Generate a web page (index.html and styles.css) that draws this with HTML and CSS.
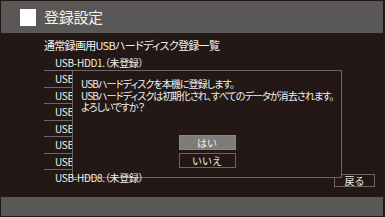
FILE: index.html
```html
<!DOCTYPE html>
<html lang="ja">
<head>
    <meta charset="UTF-8">
    <meta name="viewport" content="width=device-width, initial-scale=1.0">
    <title>登録設定</title>
    <link rel="stylesheet" href="styles.css">
</head>
<body>

    <div class="screen">
        <!-- ヘッダー -->
        <div class="header">
            <span class="header-icon"></span>
            <h1>登録設定</h1>
        </div>

        <!-- 登録一覧 -->
        <div class="content">
            <h2>通常録画用USBハードディスク登録一覧</h2>
            <div class="list-area">
                <ul class="hdd-list">
                    <li>USB-HDD1.（未登録）</li>
                    <li>USB-HDD2.（未登録）</li>
                    <li>USB-HDD3.（未登録）</li>
                    <li>USB-HDD4.（未登録）</li>
                    <li>USB-HDD5.（未登録）</li>
                    <li>USB-HDD6.（未登録）</li>
                    <li>USB-HDD7.（未登録）</li>
                    <li class="last">USB-HDD8.（未登録）</li>
                </ul>
                <button class="back-btn">戻る</button>
            </div>

            <!-- 確認ダイアログ -->
            <div class="dialog">
                <p>USBハードディスクを本機に登録します。<br>
                USBハードディスクは初期化され、すべてのデータが消去されます。<br>
                よろしいですか？</p>
                <div class="dialog-buttons">
                    <button class="selected">はい</button>
                    <button>いいえ</button>
                </div>
            </div>
        </div>

        <div class="footer"></div>
    </div>

</body>
</html>
```

FILE: styles.css
```css
/* リセット */
* {
    margin: 0;
    padding: 0;
    box-sizing: border-box;
}

body {
    font-family: "Noto Sans CJK JP", "Noto Sans", sans-serif;
    background-color: #231815;
    color: #f2f0ef;
    width: 385px;
    height: 217px;
    overflow: hidden;
}

.screen {
    width: 385px;
    height: 217px;
    padding: 1px 2px 1px 1px;
    display: flex;
    flex-direction: column;
}

/* ヘッダー */
.header {
    height: 32px;
    background-color: #595857;
    display: flex;
    align-items: center;
    padding-left: 19px;
}

.header-icon {
    width: 16px;
    height: 17px;
    background-color: #fff;
    margin-right: 8px;
}

.header h1 {
    font-size: 15px;
    font-weight: normal;
    line-height: 18px;
    letter-spacing: -0.3px;
}

/* 一覧 */
.content {
    position: relative;
    height: 164px;
    padding-left: 43px;
}

.content h2 {
    font-size: 11px;
    font-weight: normal;
    height: 22px;
    line-height: 16px;
    padding-top: 4px;
    letter-spacing: -0.7px;
    font-feature-settings: "palt";
}

.list-area {
    display: grid;
    grid-template-columns: 286px 1fr;
}

.hdd-list {
    list-style: none;
}

.hdd-list li {
    height: 16.5px;
    line-height: 16px;
    border-bottom: 1px solid #6e6664;
    font-size: 10px;
    padding-left: 11px;
    letter-spacing: -0.3px;
    font-feature-settings: "palt";
}

.hdd-list li:first-child {
    height: 16px;
    line-height: 15px;
}

.hdd-list li.last {
    border-bottom: none;
    position: relative;
    z-index: 2;
}

.back-btn {
    align-self: end;
    justify-self: end;
    margin-right: 8px;
    width: 41px;
    height: 13px;
    background: none;
    border: 1px solid #6e6664;
    color: #f2f0ef;
    font-family: inherit;
    font-size: 10px;
    line-height: 11px;
}

/* ダイアログ */
.dialog {
    position: absolute;
    left: 71px;
    top: 37px;
    width: 270px;
    height: 108px;
    background-color: #231815;
    border: 1px solid #6e6664;
    padding: 7px 0 0 8px;
    z-index: 1;
}

.dialog p {
    font-size: 10px;
    line-height: 11.5px;
    letter-spacing: -0.9px;
    white-space: nowrap;
    font-feature-settings: "palt";
}

.dialog-buttons {
    display: flex;
    flex-direction: column;
    align-items: center;
    gap: 3px;
    margin-top: 22px;
    margin-left: -8px;
}

.dialog-buttons button {
    width: 57px;
    height: 15px;
    background: none;
    border: 1px solid #6e6664;
    color: #f2f0ef;
    font-family: inherit;
    font-size: 10px;
    line-height: 13px;
}

.dialog-buttons button.selected {
    background-color: #7d7c7b;
    border-color: #8a8988;
}

/* フッター */
.footer {
    margin-top: auto;
    height: 19px;
    background-color: #595857;
}
```
